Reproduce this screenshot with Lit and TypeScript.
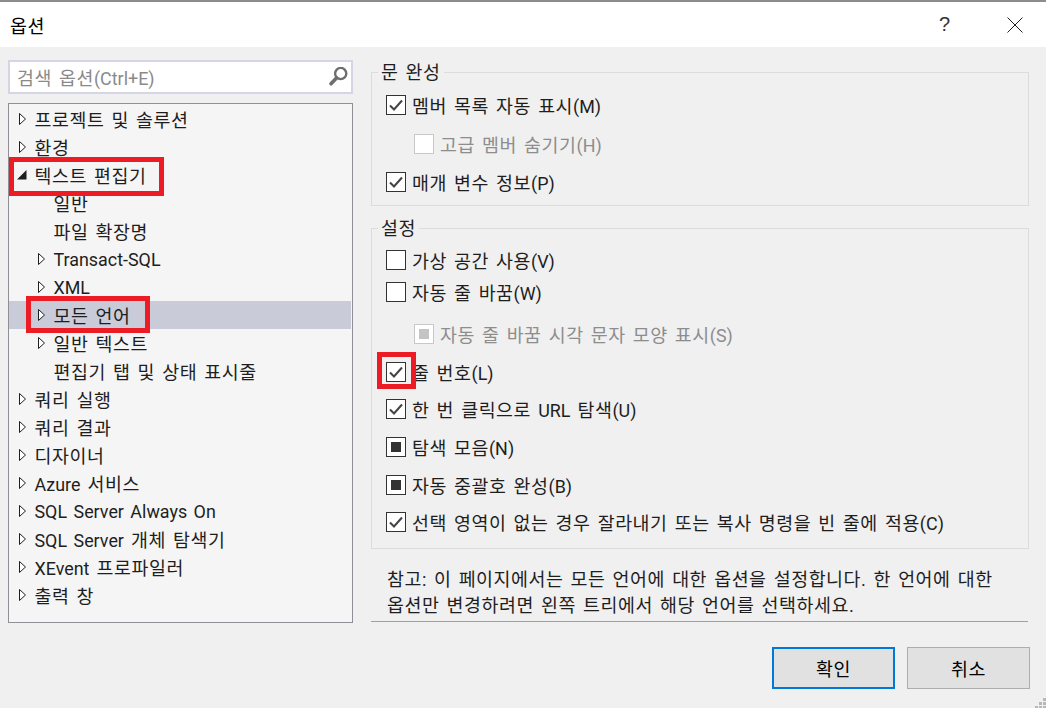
import { LitElement, html, css, svg } from "lit";
import { customElement } from "lit/decorators.js";

const tree: [string, number, string][] = [
  ["프로젝트 및 솔루션", 0, "c"],
  ["환경", 0, "c"],
  ["텍스트 편집기", 0, "e"],
  ["일반", 1, ""],
  ["파일 확장명", 1, ""],
  ["Transact-SQL", 1, "c"],
  ["XML", 1, "c"],
  ["모든 언어", 1, "c"],
  ["일반 텍스트", 1, "c"],
  ["편집기 탭 및 상태 표시줄", 1, ""],
  ["쿼리 실행", 0, "c"],
  ["쿼리 결과", 0, "c"],
  ["디자이너", 0, "c"],
  ["Azure 서비스", 0, "c"],
  ["SQL Server Always On", 0, "c"],
  ["SQL Server 개체 탐색기", 0, "c"],
  ["XEvent 프로파일러", 0, "c"],
  ["출력 창", 0, "c"],
];

type Opt = { t: string; s: "on" | "off" | "mix"; dis?: boolean; ind?: boolean; m: number };
const g1: Opt[] = [
  { t: "멤버 목록 자동 표시(M)", s: "on", m: 0 },
  { t: "고급 멤버 숨기기(H)", s: "off", dis: true, ind: true, m: 39 },
  { t: "매개 변수 정보(P)", s: "on", m: 38 },
];
const g2: Opt[] = [
  { t: "가상 공간 사용(V)", s: "off", m: 0 },
  { t: "자동 줄 바꿈(W)", s: "off", m: 32 },
  { t: "자동 줄 바꿈 시각 문자 모양 표시(S)", s: "mix", dis: true, ind: true, m: 42 },
  { t: "줄 번호(L)", s: "on", m: 38 },
  { t: "한 번 클릭으로 URL 탐색(U)", s: "on", m: 37 },
  { t: "탐색 모음(N)", s: "mix", m: 38 },
  { t: "자동 중괄호 완성(B)", s: "mix", m: 38 },
  { t: "선택 영역이 없는 경우 잘라내기 또는 복사 명령을 빈 줄에 적용(C)", s: "on", m: 37 },
];

const txt = (t: string) =>
  t.split(/([A-Za-z()+\-]+(?: [A-Za-z()+\-]+)*)/).map((p, i) => (i % 2 ? html`<span class="lat">${p}</span>` : p));

const latin = css`
  .lat { font-size: 17.9px; letter-spacing: 0; word-spacing: 2px; }
`;

@customElement("app-root")
export class AppRoot extends LitElement {
  static styles = [latin, css`
    :host {
      display: block;
      width: 1046px;
      height: 708px;
      background: #f0f0f0;
      font-family: Roboto, "Noto Sans CJK KR", sans-serif;
      font-size: 18.4px;
      letter-spacing: 0.55px;
      word-spacing: 2px;
      color: #1e1e1e;
      overflow: hidden;
      position: relative;
    }
    .top { height: 2px; background: #8c8c8c; }
    .title {
      height: 45px; background: #fff; display: flex; align-items: center;
      padding-left: 10px; color: #000; box-sizing: border-box;
    }
    .title .name { flex: 1; }
    .help { width: 16px; font-family: "Liberation Sans", sans-serif; font-size: 20px; color: #333; margin-right: 52px; }
    .close { margin-right: 23px; display: block; }
    .body { display: flex; padding: 13px 17px 0 8px; gap: 18px; height: 648px; box-sizing: border-box; }
    .left { width: 345px; flex: none; display: flex; flex-direction: column; gap: 9px; }
    .search {
      height: 34px; box-sizing: border-box; background: #fff; border: 2px solid #d5d5e6;
      display: flex; align-items: center; padding: 0 3px 0 7px; color: #8a8a8a; justify-content: space-between;
    }
    .tree {
      height: 520px; box-sizing: border-box; background: #f5f5f5; border: 1px solid #8e9095;
      padding-top: 1px; overflow: hidden;
    }
    .row { height: 28px; display: flex; align-items: center; white-space: nowrap; position: relative; }
    .row.sel { background: #cacbd9; margin-right: 1px; }
    .arrow { width: 12px; flex: none; margin-right: 6.5px; display: block; }
    .lv0 { padding-left: 7px; }
    .lv1 { padding-left: 26px; }
    .right { flex: 1; display: flex; flex-direction: column; min-width: 0; }
    .group { border: 1px solid #dcdcdc; position: relative; padding-left: 14px; box-sizing: border-box; }
    .g1 { height: 134px; margin-top: 12px; padding-top: 20px; }
    .g2 { height: 321px; margin-top: 22px; padding-top: 19px; }
    .legend {
      position: absolute; left: 6px; top: -12px; padding: 0 3px; background: #f0f0f0; color: #1e1e1e; line-height: 24px;
    }
    .opt { display: flex; align-items: center; white-space: nowrap; height: 24px; }
    .opt.ind { padding-left: 28px; }
    .opt.dis { color: #8d8d8d; }
    .box {
      width: 20px; height: 20px; box-sizing: border-box; border: 1px solid #333; background: #fff;
      margin-right: 6px; flex: none; display: flex; align-items: center; justify-content: center;
    }
    .opt.dis .box { border: 1px solid #c8c8c8; }
    .sq { width: 10px; height: 10px; background: #333; }
    .opt.dis .sq { background: #c4c4c4; }
    .note { padding: 18px 0 0 16px; line-height: 26px; height: 72px; box-sizing: border-box; color: #1e1e1e; white-space: nowrap; }
    .rule { height: 1px; background: #a0a0a0; margin-right: 1px; }
    .btns { display: flex; justify-content: flex-end; gap: 12px; margin-top: 25px; margin-right: -1px; }
    .btn {
      width: 123px; height: 42px; box-sizing: border-box; background: #e1e1e1; border: 1px solid #adadad;
      display: flex; align-items: center; justify-content: center; color: #000;
    }
    .btn.def { border: 2px solid #0078d7; }
    .mark { position: absolute; border: 5px solid #ed1c24; box-sizing: border-box; pointer-events: none; }
    .m1 { left: 9px; top: 157px; width: 155px; height: 39px; }
    .m2 { left: 26px; top: 296px; width: 124px; height: 37px; }
    .m3 { left: 377px; top: 352px; width: 39px; height: 37px; }
    .grip { position: absolute; right: 0; bottom: 0; display: block; }
  `];

  private arrow(kind: string) {
    if (kind === "c")
      return html`<svg class="arrow" width="12" height="14" viewBox="0 0 12 14"><path d="M3.5 1.5v11l6-5.5z" fill="#fff" stroke="#1e1e1e" stroke-width="1"/></svg>`;
    if (kind === "e")
      return html`<svg class="arrow" width="12" height="14" viewBox="0 0 12 14"><path d="M1 11.5h9.5v-9.5z" fill="#1e1e1e"/></svg>`;
    return html`<span class="arrow"></span>`;
  }

  private opt(o: Opt) {
    const cls = `opt ${o.ind ? "ind" : ""} ${o.dis ? "dis" : ""}`;
    return html`<div class=${cls} style="margin-top:${o.m ? o.m - 24 : 0}px">
      <span class="box">
        ${o.s === "on"
          ? html`<svg width="16" height="14" viewBox="0 0 16 14"><path d="M2 7.5l4 4 8-9" fill="none" stroke="#444" stroke-width="2"/></svg>`
          : o.s === "mix"
          ? html`<span class="sq"></span>`
          : ""}
      </span><span>${txt(o.t)}</span>
    </div>`;
  }

  render() {
    return html`
      <div class="top"></div>
      <div class="title">
        <span class="name">옵션</span>
        <span class="help">?</span>
        <svg class="close" width="16" height="16" viewBox="0 0 16 16"><path d="M.5.5l15 15M15.5.5l-15 15" stroke="#222" stroke-width="1" fill="none"/></svg>
      </div>
      <div class="body">
        <div class="left">
          <div class="search">
            <span>${txt("검색 옵션(Ctrl+E)")}</span>
            <svg width="20" height="20" viewBox="0 0 20 20"><circle cx="12.7" cy="6.5" r="5.6" fill="#fff" stroke="#6e6e6e" stroke-width="2.4"/><path d="M8.5 11L3 16.8" stroke="#6e6e6e" stroke-width="3.6" stroke-linecap="round"/></svg>
          </div>
          <div class="tree">
            ${tree.map(
              ([t, l, k], i) => html`<div class="row lv${l} ${i === 7 ? "sel" : ""}">${this.arrow(k)}<span>${txt(t)}</span></div>`
            )}
          </div>
        </div>
        <div class="right">
          <div class="group g1"><span class="legend">문 완성</span>${g1.map((o) => this.opt(o))}</div>
          <div class="group g2"><span class="legend">설정</span>${g2.map((o) => this.opt(o))}</div>
          <div class="note">참고: 이 페이지에서는 모든 언어에 대한 옵션을 설정합니다. 한 언어에 대한<br />옵션만 변경하려면 왼쪽 트리에서 해당 언어를 선택하세요.</div>
          <div class="rule"></div>
          <div class="btns"><div class="btn def">확인</div><div class="btn">취소</div></div>
        </div>
      </div>
      <div class="mark m1"></div>
      <div class="mark m2"></div>
      <div class="mark m3"></div>
      <svg class="grip" width="11" height="10" viewBox="0 0 11 10" fill="#b8b8b8">
        ${svg`<rect x="8" y="0" width="3" height="3"/><rect x="4" y="4" width="3" height="3"/><rect x="8" y="4" width="3" height="3"/><rect x="0" y="8" width="3" height="2"/><rect x="4" y="8" width="3" height="2"/><rect x="8" y="8" width="3" height="2"/>`}
      </svg>
    `;
  }
}
